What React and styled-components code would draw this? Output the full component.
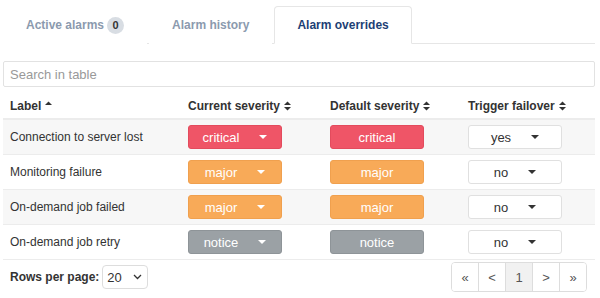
import React from "react";
import styled, { createGlobalStyle } from "styled-components";

const GlobalStyle = createGlobalStyle`
  body {
    margin: 0;
    background: #fff;
    font-family: "Liberation Sans", Arial, sans-serif;
    color: #333;
  }
`;

const Page = styled.div`
  width: 592px;
  padding-left: 3px;
`;

const TabBar = styled.div`
  display: flex;
  height: 37px;
  padding-top: 6px;
  border-bottom: 1px solid #e6e6e6;
`;

const Tab = styled.div`
  display: flex;
  align-items: center;
  gap: 3px;
  padding: 0 22px;
  margin-right: 2px;
  margin-bottom: -1px;
  border: 1px solid ${p => (p.active ? "#e6e6e6" : "transparent")};
  border-bottom-color: ${p => (p.active ? "#fff" : "transparent")};
  border-radius: 4px 4px 0 0;
  background: #fff;
  font-size: 12px;
  font-weight: bold;
  color: ${p => (p.active ? "#1d3f75" : "#8b9aae")};
`;

const Badge = styled.span`
  display: inline-flex;
  align-items: center;
  justify-content: center;
  width: 17px;
  height: 17px;
  border-radius: 50%;
  background: #d8dde3;
  color: #333;
  font-size: 11px;
  font-weight: bold;
`;

const Search = styled.input`
  display: block;
  box-sizing: border-box;
  width: 592px;
  height: 26px;
  margin-top: 17px;
  padding: 0 6px;
  border: 1px solid #e2e2e2;
  border-radius: 2px;
  font-family: inherit;
  font-size: 13px;
  color: #333;
  &::placeholder {
    color: #999;
  }
`;

const Table = styled.div`
  margin-top: 7px;
`;

const Row = styled.div`
  display: grid;
  grid-template-columns: 178px 142px 138px 134px;
  height: ${p => (p.head ? "24px" : "34px")};
  border-bottom: ${p => (p.head ? "2px" : "1px")} solid #ececec;
  background: ${p => (p.alt ? "#f7f7f7" : "#fff")};
`;

const Cell = styled.div`
  display: flex;
  align-items: center;
  padding-left: 7px;
  font-size: 12px;
  font-weight: ${p => (p.head ? "bold" : "normal")};
  color: #333;
  gap: 4px;
`;

const SEV = {
  critical: { bg: "#ef5567", border: "#e34b5d" },
  major: { bg: "#f8aa58", border: "#f0a04e" },
  notice: { bg: "#9ba1a5", border: "#8e9498" },
};

const SeverityBox = styled.div`
  box-sizing: border-box;
  display: flex;
  align-items: center;
  justify-content: center;
  gap: 20px;
  width: 94px;
  height: 24px;
  border-radius: 3px;
  border: 1px solid ${p => (p.plain ? "#e0e0e0" : SEV[p.level].border)};
  background: ${p => (p.plain ? "#fff" : SEV[p.level].bg)};
  color: ${p => (p.plain ? "#333" : "#fff")};
  font-size: 13px;
`;

const Footer = styled.div`
  display: flex;
  align-items: center;
  justify-content: space-between;
  height: 30px;
  margin-top: 2px;
  padding: 0 8px 0 7px;
`;

const RowsLabel = styled.div`
  display: flex;
  align-items: center;
  gap: 3px;
  font-size: 12px;
  font-weight: bold;
`;

const RowsSelect = styled.div`
  box-sizing: border-box;
  display: flex;
  align-items: center;
  justify-content: space-between;
  width: 46px;
  height: 24px;
  padding: 0 5px 0 4px;
  border: 1px solid #ddd;
  border-radius: 4px;
  font-size: 13px;
  font-weight: normal;
`;

const Pager = styled.div`
  display: flex;
  height: 28px;
  border: 1px solid #ddd;
  border-radius: 4px;
  overflow: hidden;
`;

const PageBtn = styled.div`
  display: flex;
  align-items: center;
  justify-content: center;
  width: 26px;
  font-size: 13px;
  color: #555;
  background: ${p => (p.active ? "#f1f1f1" : "#fff")};
  & + & {
    border-left: 1px solid #ddd;
  }
`;

const Caret = ({ color }) => (
  <svg width="8" height="4" viewBox="0 0 8 4">
    <path d="M0 0 L8 0 L4 4 Z" fill={color} />
  </svg>
);

const SortIcon = ({ up }) => (
  <svg width="7" height="10" viewBox="0 0 7 10">
    <path d="M0 4 L3.5 0.5 L7 4 Z" fill="#333" />
    {!up && <path d="M0 6 L3.5 9.5 L7 6 Z" fill="#333" />}
  </svg>
);

const Chevron = () => (
  <svg width="9" height="6" viewBox="0 0 9 6">
    <path d="M1 1 L4.5 4.5 L8 1" fill="none" stroke="#333" strokeWidth="1.3" />
  </svg>
);

const rows = [
  { label: "Connection to server lost", current: "critical", def: "critical", failover: "yes" },
  { label: "Monitoring failure", current: "major", def: "major", failover: "no" },
  { label: "On-demand job failed", current: "major", def: "major", failover: "no" },
  { label: "On-demand job retry", current: "notice", def: "notice", failover: "no" },
];

export default function App() {
  return (
    <Page>
      <GlobalStyle />
      <TabBar>
        <Tab>
          Active alarms <Badge>0</Badge>
        </Tab>
        <Tab>Alarm history</Tab>
        <Tab active>Alarm overrides</Tab>
      </TabBar>
      <Search placeholder="Search in table" />
      <Table>
        <Row head>
          <Cell head>Label <SortIcon up /></Cell>
          <Cell head>Current severity <SortIcon /></Cell>
          <Cell head>Default severity <SortIcon /></Cell>
          <Cell head>Trigger failover <SortIcon /></Cell>
        </Row>
        {rows.map((r, i) => (
          <Row key={r.label} alt={i % 2 === 0}>
            <Cell>{r.label}</Cell>
            <Cell>
              <SeverityBox level={r.current}>
                {r.current}
                <Caret color="#fff" />
              </SeverityBox>
            </Cell>
            <Cell>
              <SeverityBox level={r.def}>{r.def}</SeverityBox>
            </Cell>
            <Cell>
              <SeverityBox plain>
                {r.failover}
                <Caret color="#333" />
              </SeverityBox>
            </Cell>
          </Row>
        ))}
      </Table>
      <Footer>
        <RowsLabel>
          Rows per page:
          <RowsSelect>
            20 <Chevron />
          </RowsSelect>
        </RowsLabel>
        <Pager>
          <PageBtn>«</PageBtn>
          <PageBtn>&lt;</PageBtn>
          <PageBtn active>1</PageBtn>
          <PageBtn>&gt;</PageBtn>
          <PageBtn>»</PageBtn>
        </Pager>
      </Footer>
    </Page>
  );
}
